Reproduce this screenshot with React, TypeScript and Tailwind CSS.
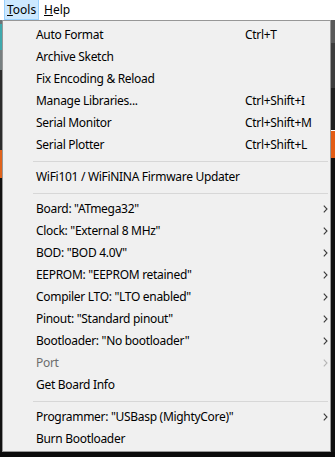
import React from "react";

type Item =
  | { kind: "item"; label: string; shortcut?: string; sub?: boolean; disabled?: boolean }
  | { kind: "sep" };

const ITEMS: Item[] = [
  { kind: "item", label: "Auto Format", shortcut: "Ctrl+T" },
  { kind: "item", label: "Archive Sketch" },
  { kind: "item", label: "Fix Encoding & Reload" },
  { kind: "item", label: "Manage Libraries...", shortcut: "Ctrl+Shift+I" },
  { kind: "item", label: "Serial Monitor", shortcut: "Ctrl+Shift+M" },
  { kind: "item", label: "Serial Plotter", shortcut: "Ctrl+Shift+L" },
  { kind: "sep" },
  { kind: "item", label: "WiFi101 / WiFiNINA Firmware Updater" },
  { kind: "sep" },
  { kind: "item", label: 'Board: "ATmega32"', sub: true },
  { kind: "item", label: 'Clock: "External 8 MHz"', sub: true },
  { kind: "item", label: 'BOD: "BOD 4.0V"', sub: true },
  { kind: "item", label: 'EEPROM: "EEPROM retained"', sub: true },
  { kind: "item", label: 'Compiler LTO: "LTO enabled"', sub: true },
  { kind: "item", label: 'Pinout: "Standard pinout"', sub: true },
  { kind: "item", label: 'Bootloader: "No bootloader"', sub: true },
  { kind: "item", label: "Port", sub: true, disabled: true },
  { kind: "item", label: "Get Board Info" },
  { kind: "sep" },
  { kind: "item", label: 'Programmer: "USBasp (MightyCore)"', sub: true },
  { kind: "item", label: "Burn Bootloader" },
];

function Chevron({ disabled }: { disabled?: boolean }) {
  return (
    <svg width="5" height="8" viewBox="0 0 5 8" className="shrink-0">
      <path d="M0.8 0.6 L4 4 L0.8 7.4" fill="none" stroke={disabled ? "#b5b5b5" : "#3a3a3a"} strokeWidth="1.1" />
    </svg>
  );
}

export default function App() {
  return (
    <div
      className="relative w-[335px] h-[457px] overflow-hidden bg-[#0b0b0b] text-[12px] text-black"
      style={{ fontFamily: "'Noto Sans', 'Open Sans', sans-serif" }}
    >
      {/* menu bar */}
      <div className="h-[20px] bg-white flex items-stretch pl-[4px]">
        <div className="flex items-center px-[2px] bg-[#cce8ff] border border-[#99d1ff] border-t-0 w-[35px]">
          <span><span className="underline">T</span>ools</span>
        </div>
        <div className="flex items-center px-[5px]">
          <span><span className="underline">H</span>elp</span>
        </div>
      </div>

      {/* app behind the menu */}
      <div className="flex h-[432px]">
        <div className="w-[2px] flex flex-col">
          <div className="h-[4px] bg-[#6c7476]" />
          <div className="h-[26px] bg-[#3fa9ad]" />
          <div className="h-[20px] bg-[#777f80]" />
          <div className="h-[80px] bg-[#2c2c2c]" />
          <div className="h-[28px] bg-[#e0631c]" />
          <div className="flex-1 bg-[#121212]" />
        </div>
        <div className="flex-1" />
        <div className="w-[4px] flex flex-col">
          <div className="h-[23px] bg-[#5a5a5a]" />
          <div className="h-[45px] bg-[#3d3d3d]" />
          <div className="h-[42px] bg-[#202020]" />
          <div className="h-[1px] bg-white" />
          <div className="h-[27px] bg-[#e35c14]" />
          <div className="flex-1 bg-[#101010]" />
        </div>
      </div>

      {/* dropdown */}
      <div className="absolute left-[2px] top-[20px] w-[329px] border border-[#979797] bg-[#f0f0f0] pt-[3px] pb-[1px] tracking-[-0.3px]">
        {ITEMS.map((it, i) =>
          it.kind === "sep" ? (
            <div key={i} className="h-[10px] flex items-center pl-[30px] pr-[2px]">
              <div className="h-px w-full bg-[#d7d7d7]" />
            </div>
          ) : (
            <div key={i} className={`h-[22px] flex items-center pl-[33px] pr-[2px] ${it.disabled ? "text-[#6d6d6d]" : ""}`}>
              <span className="w-[209px] whitespace-nowrap">{it.label}</span>
              <span className="flex-1 whitespace-nowrap">{it.shortcut}</span>
              <span className="w-[5px] flex">{it.sub && <Chevron disabled={it.disabled} />}</span>
            </div>
          )
        )}
      </div>
    </div>
  );
}
